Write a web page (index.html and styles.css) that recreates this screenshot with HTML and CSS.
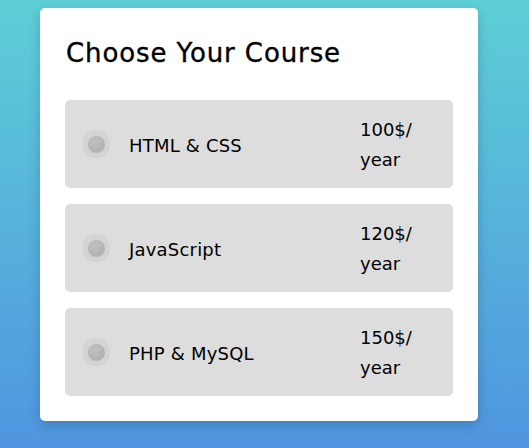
FILE: index.html
```html
<!DOCTYPE html>
<html>
<head>
<meta charset="utf-8">
<link rel="stylesheet" href="styles.css">
</head>
<body>
<div class="page">
  <div class="card">
    <h2 class="title">Choose Your Course</h2>
    <div class="options">
      <label class="option">
        <span class="radio"><span class="dot"></span></span>
        <span class="name">HTML &amp; CSS</span>
        <span class="price">100$/ year</span>
      </label>
      <label class="option">
        <span class="radio"><span class="dot"></span></span>
        <span class="name">JavaScript</span>
        <span class="price">120$/ year</span>
      </label>
      <label class="option">
        <span class="radio"><span class="dot"></span></span>
        <span class="name">PHP &amp; MySQL</span>
        <span class="price">150$/ year</span>
      </label>
    </div>
  </div>
</div>
</body>
</html>
```
FILE: styles.css
```css
html, body {
  margin: 0;
  height: 100%;
}
body {
  background: linear-gradient(180deg, #5ecfd6 0%, #4f95e0 100%);
  font-family: "DejaVu Sans", "Open Sans", sans-serif;
  color: #000;
}
.page {
  padding: 8px 0 0 40px;
}
.card {
  width: 438px;
  box-sizing: border-box;
  background: #fff;
  border-radius: 5px;
  padding: 25px;
  box-shadow: 0 4px 12px rgba(0, 0, 0, 0.18);
}
.title {
  margin: 0 0 27px 1px;
  font-size: 26px;
  line-height: 40px;
  letter-spacing: 0.9px;
  font-weight: normal;
  -webkit-text-stroke: 0.35px #000;
}
.options {
  display: flex;
  flex-direction: column;
  gap: 16px;
}
.option {
  display: flex;
  align-items: center;
  height: 88px;
  box-sizing: border-box;
  padding: 0 28px 0 17px;
  background: #dddddd;
  border-radius: 5px;
}
.radio {
  width: 28px;
  height: 28px;
  border-radius: 50%;
  background: #d3d3d3;
  display: flex;
  align-items: center;
  justify-content: center;
  flex: none;
}
.dot {
  width: 17px;
  height: 17px;
  border-radius: 50%;
  background: radial-gradient(circle at 40% 35%, #c2c2c2 0%, #a9a9a9 100%);
}
.name {
  flex: 1;
  margin-left: 19px;
  font-size: 18px;
  letter-spacing: 0.2px;
  padding-top: 2px;
}
.price {
  width: 65px;
  font-size: 18px;
  line-height: 30px;
  padding-top: 2px;
}
```
